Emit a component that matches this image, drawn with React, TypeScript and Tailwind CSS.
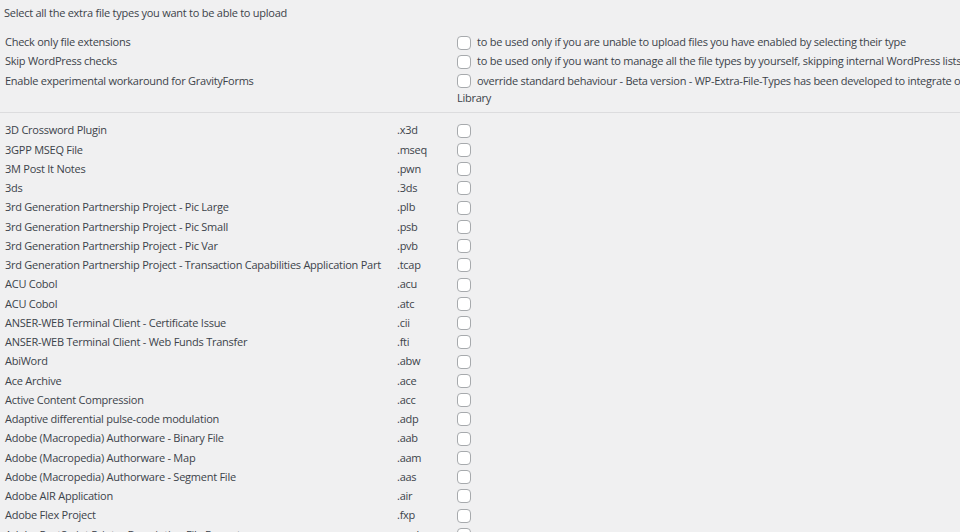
import React from "react";

const files: [string, string][] = [
  ["3D Crossword Plugin", ".x3d"],
  ["3GPP MSEQ File", ".mseq"],
  ["3M Post It Notes", ".pwn"],
  ["3ds", ".3ds"],
  ["3rd Generation Partnership Project - Pic Large", ".plb"],
  ["3rd Generation Partnership Project - Pic Small", ".psb"],
  ["3rd Generation Partnership Project - Pic Var", ".pvb"],
  ["3rd Generation Partnership Project - Transaction Capabilities Application Part", ".tcap"],
  ["ACU Cobol", ".acu"],
  ["ACU Cobol", ".atc"],
  ["ANSER-WEB Terminal Client - Certificate Issue", ".cii"],
  ["ANSER-WEB Terminal Client - Web Funds Transfer", ".fti"],
  ["AbiWord", ".abw"],
  ["Ace Archive", ".ace"],
  ["Active Content Compression", ".acc"],
  ["Adaptive differential pulse-code modulation", ".adp"],
  ["Adobe (Macropedia) Authorware - Binary File", ".aab"],
  ["Adobe (Macropedia) Authorware - Map", ".aam"],
  ["Adobe (Macropedia) Authorware - Segment File", ".aas"],
  ["Adobe AIR Application", ".air"],
  ["Adobe Flex Project", ".fxp"],
  ["Adobe PostScript Printer Description File Format", ".ppd"],
];

function Box() {
  return <span className="inline-block w-[14px] h-[14px] rounded-[4px] border border-[#a7aaad] bg-white shrink-0" />;
}

export default function App() {
  return (
    <div className="w-[960px] h-[532px] overflow-hidden bg-[#f0f0f1] text-[#3c434a] text-[11px] tracking-[-0.25px] font-['Open_Sans',sans-serif]">
      <p className="pl-[4px] pt-[3px] leading-[19px] whitespace-nowrap">Select all the extra file types you want to be able to upload</p>

      {/* options */}
      <div className="mt-[11px] pl-[5px]">
        <div className="flex h-[19px] items-center">
          <span className="w-[452px] shrink-0">Check only file extensions</span>
          <Box />
          <span className="ml-[6px] whitespace-nowrap">to be used only if you are unable to upload files you have enabled by selecting their type</span>
        </div>
        <div className="flex h-[19px] items-center">
          <span className="w-[452px] shrink-0">Skip WordPress checks</span>
          <Box />
          <span className="ml-[6px] whitespace-nowrap">to be used only if you want to manage all the file types by yourself, skipping internal WordPress lists</span>
        </div>
        <div className="flex">
          <span className="w-[452px] shrink-0 leading-[19px] whitespace-nowrap">Enable experimental workaround for GravityForms</span>
          <div className="leading-[17px] pt-[1px]">
            <div className="flex items-center h-[17px]">
              <Box />
              <span className="ml-[6px] whitespace-nowrap">override standard behaviour - Beta version - WP-Extra-File-Types has been developed to integrate our plugin with the WordPress Media</span>
            </div>
            <div>Library</div>
          </div>
        </div>
      </div>

      <div className="mt-[6px] h-px bg-[#dcdcde]" />

      {/* file types */}
      <div className="mt-[8px] pl-[5px]">
        {files.map(([name, ext], i) => (
          <div key={i} className="flex h-[19.25px] items-center">
            <span className="w-[392px] shrink-0 whitespace-nowrap">{name}</span>
            <span className="w-[60px] shrink-0">{ext}</span>
            <Box />
          </div>
        ))}
      </div>
    </div>
  );
}
